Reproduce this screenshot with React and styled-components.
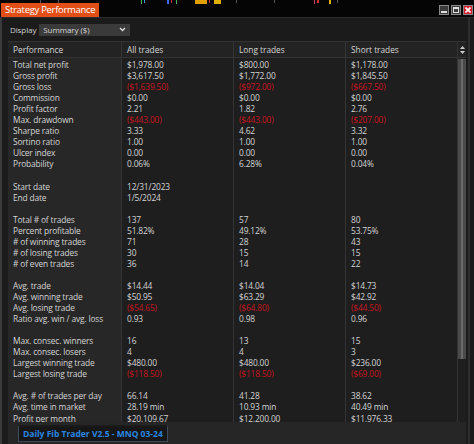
import React from 'react';
import styled, { createGlobalStyle } from 'styled-components';

const Global = createGlobalStyle`
  html, body { margin: 0; padding: 0; background: #111; }
  body { font-family: "Open Sans", "Noto Sans", sans-serif; }
`;

const Screen = styled.div`
  width: 474px;
  height: 444px;
  display: flex;
  flex-direction: column;
  background: #1b1b1b;
  overflow: hidden;
`;

const TopBar = styled.div`
  position: relative;
  height: 17px;
  flex: none;
  background: #050505;
  display: flex;
  align-items: flex-end;
  justify-content: space-between;
  border-bottom: 1px solid #2c2c2c;
`;

const ChartBits = styled.svg`
  position: absolute;
  left: 0;
  top: 0;
`;

const TitleTab = styled.div`
  position: relative;
  height: 14px;
  margin-left: 1px;
  padding: 0 4px;
  background: #e14f17;
  color: #fff;
  font-size: 9.5px;
  line-height: 14px;
  letter-spacing: -0.3px;
`;

const WinButtons = styled.div`
  display: flex;
  gap: 2px;
  align-self: flex-start;
  margin-top: 5px;
  margin-right: 1px;
`;

const WinButton = styled.div`
  width: 10px;
  height: 10px;
  box-sizing: border-box;
  border: 1px solid #888;
  background: ${p => (p.close ? '#d8202c' : '#3a3a3a')};
  display: flex;
  align-items: center;
  justify-content: center;
`;

const Body = styled.div`
  flex: 1;
  display: flex;
  min-height: 0;
`;

const LeftEdge = styled.div`
  width: 8px;
  flex: none;
  background: linear-gradient(to right, #3a3a3a 0 2px, #1b1b1b 2px);
`;

const RightEdge = styled.div`
  width: 8px;
  flex: none;
  background: linear-gradient(to right, #1b1b1b 0 2px, #2e2e2e 2px 4px, #1b1b1b 4px);
`;

const Content = styled.div`
  flex: 1;
  display: flex;
  flex-direction: column;
  min-width: 0;
`;

const DisplayRow = styled.div`
  height: 23px;
  flex: none;
  display: flex;
  align-items: center;
  gap: 3px;
  padding: 0 2px;
  color: #cfcfcf;
  font-size: 8px;
  letter-spacing: -0.1px;
`;

const Select = styled.div`
  width: 91px;
  height: 12px;
  box-sizing: border-box;
  background: #3a3a3a;
  display: flex;
  align-items: center;
  justify-content: space-between;
  padding: 0 4px;
  color: #d8d8d8;
`;

const Table = styled.div`
  flex: 1;
  display: flex;
  flex-direction: column;
  min-height: 0;
  border-top: 1px solid #333;
`;

const HeaderRow = styled.div`
  height: 15px;
  flex: none;
  display: grid;
  grid-template-columns: 114px 112px 112px 112px 8px;
  background: #232323;
  border-bottom: 1px solid #333;
  color: #d6d6d6;
  font-size: 8.3px;
`;

const HeadCell = styled.div`
  display: flex;
  align-items: center;
  padding-left: 5px;
  border-right: 1px solid #343434;
`;

const ScrollArrows = styled.div`
  display: flex;
  flex-direction: column;
  align-items: center;
  justify-content: center;
  gap: 2px;
`;

const Rows = styled.div`
  flex: 1;
  min-height: 0;
  display: grid;
  grid-template-columns: 114px 112px 112px 112px 8px;
  overflow: hidden;
`;

const Column = styled.div`
  background: ${p => (p.first ? '#272727' : '#1e1e1e')};
  border-right: 1px solid #343434;
  padding-top: 1px;
`;

const Cell = styled.div`
  height: 11.06px;
  line-height: 11.06px;
  padding-left: 5px;
  font-size: 8.4px;
  letter-spacing: -0.15px;
  white-space: nowrap;
  color: ${p => (p.neg ? '#c9141e' : '#d4d4d4')};
`;

const ScrollTrack = styled.div`
  background: #1e1e1e;
  padding-top: 1px;
`;

const Thumb = styled.div`
  height: 300px;
  background: linear-gradient(to right, #4a4a4a 0 3px, #6a6a6a 3px 5px, #4a4a4a 5px);
`;

const Footer = styled.div`
  height: 22px;
  flex: none;
  background: #262626;
  display: flex;
  align-items: center;
  padding-left: 10px;
`;

const StrategyTab = styled.div`
  height: 17px;
  box-sizing: border-box;
  padding: 0 4px;
  background: #161616;
  border: 1px solid #3b4c5e;
  border-top: 2px solid #1a1a1a;
  color: #2b86e0;
  font-weight: 700;
  font-size: 8.5px;
  line-height: 14px;
`;

const rows = [
  ['Total net profit', '$1,978.00', '$800.00', '$1,178.00'],
  ['Gross profit', '$3,617.50', '$1,772.00', '$1,845.50'],
  ['Gross loss', '($1,639.50)', '($972.00)', '($667.50)'],
  ['Commission', '$0.00', '$0.00', '$0.00'],
  ['Profit factor', '2.21', '1.82', '2.76'],
  ['Max. drawdown', '($443.00)', '($443.00)', '($207.00)'],
  ['Sharpe ratio', '3.33', '4.62', '3.32'],
  ['Sortino ratio', '1.00', '1.00', '1.00'],
  ['Ulcer index', '0.00', '0.00', '0.00'],
  ['Probability', '0.06%', '6.28%', '0.04%'],
  ['', '', '', ''],
  ['Start date', '12/31/2023', '', ''],
  ['End date', '1/5/2024', '', ''],
  ['', '', '', ''],
  ['Total # of trades', '137', '57', '80'],
  ['Percent profitable', '51.82%', '49.12%', '53.75%'],
  ['# of winning trades', '71', '28', '43'],
  ['# of losing trades', '30', '15', '15'],
  ['# of even trades', '36', '14', '22'],
  ['', '', '', ''],
  ['Avg. trade', '$14.44', '$14.04', '$14.73'],
  ['Avg. winning trade', '$50.95', '$63.29', '$42.92'],
  ['Avg. losing trade', '($54.65)', '($64.80)', '($44.50)'],
  ['Ratio avg. win / avg. loss', '0.93', '0.98', '0.96'],
  ['', '', '', ''],
  ['Max. consec. winners', '16', '13', '15'],
  ['Max. consec. losers', '4', '4', '3'],
  ['Largest winning trade', '$480.00', '$480.00', '$236.00'],
  ['Largest losing trade', '($118.50)', '($118.50)', '($69.00)'],
  ['', '', '', ''],
  ['Avg. # of trades per day', '66.14', '41.28', '38.62'],
  ['Avg. time in market', '28.19 min', '10.93 min', '40.49 min'],
  ['Profit per month', '$20,109.67', '$12,200.00', '$11,976.33'],
];

const headers = ['Performance', 'All trades', 'Long trades', 'Short trades'];

export default function App() {
  return (
    <Screen>
      <Global />
      <TopBar>
        <ChartBits width="474" height="6">
          <rect x="40" y="0" width="1" height="3" fill="#555" />
          <rect x="58" y="0" width="1" height="3" fill="#555" />
          <rect x="141" y="0" width="1" height="4" fill="#4caf50" />
          <rect x="144" y="0" width="1" height="3" fill="#3aa0e0" />
          <rect x="167" y="0" width="2" height="4" fill="#3a6ee0" />
          <rect x="171" y="0" width="1" height="3" fill="#d03030" />
          <rect x="176" y="0" width="1" height="4" fill="#4caf50" />
          <rect x="195" y="0" width="12" height="4" fill="#e0a000" />
          <rect x="209" y="0" width="1" height="3" fill="#d03030" />
          <rect x="214" y="0" width="7" height="4" fill="#e0b000" />
          <rect x="236" y="0" width="1" height="3" fill="#555" />
          <rect x="274" y="0" width="1" height="3" fill="#555" />
          <rect x="314" y="0" width="1" height="4" fill="#c04060" />
          <rect x="317" y="0" width="2" height="3" fill="#d03030" />
          <rect x="329" y="0" width="2" height="4" fill="#e0b000" />
          <rect x="337" y="0" width="1" height="3" fill="#555" />
        </ChartBits>
        <TitleTab>Strategy Performance</TitleTab>
        <WinButtons>
          <WinButton>
            <svg width="6" height="6"><rect x="0" y="4" width="6" height="2" fill="#ddd" /></svg>
          </WinButton>
          <WinButton>
            <svg width="6" height="6"><rect x="0.5" y="0.5" width="5" height="5" fill="none" stroke="#ddd" /><rect x="0" y="0" width="6" height="2" fill="#ddd" /></svg>
          </WinButton>
          <WinButton close>
            <svg width="6" height="6"><path d="M0.5 0.5 L5.5 5.5 M5.5 0.5 L0.5 5.5" stroke="#fff" strokeWidth="1.6" /></svg>
          </WinButton>
        </WinButtons>
      </TopBar>
      <Body>
        <LeftEdge />
        <Content>
          <DisplayRow>
            <span>Display</span>
            <Select>
              <span>Summary ($)</span>
              <svg width="7" height="5"><path d="M1 1 L3.5 3.5 L6 1" fill="none" stroke="#ddd" strokeWidth="1.3" /></svg>
            </Select>
          </DisplayRow>
          <Table>
            <HeaderRow>
              {headers.map(h => <HeadCell key={h}>{h}</HeadCell>)}
              <ScrollArrows>
                <svg width="5" height="3"><path d="M0 3 L2.5 0 L5 3 Z" fill="#ccc" /></svg>
                <svg width="5" height="3"><path d="M0 0 L2.5 3 L5 0 Z" fill="#ccc" /></svg>
              </ScrollArrows>
            </HeaderRow>
            <Rows>
              {[0, 1, 2, 3].map(c => (
                <Column key={c} first={c === 0}>
                  {rows.map((r, i) => (
                    <Cell key={i} neg={c > 0 && r[c].startsWith('(')}>{r[c]}</Cell>
                  ))}
                </Column>
              ))}
              <ScrollTrack>
                <Thumb />
              </ScrollTrack>
            </Rows>
          </Table>
          <Footer>
            <StrategyTab>Daily Fib Trader V2.5 - MNQ 03-24</StrategyTab>
          </Footer>
        </Content>
        <RightEdge />
      </Body>
    </Screen>
  );
}
